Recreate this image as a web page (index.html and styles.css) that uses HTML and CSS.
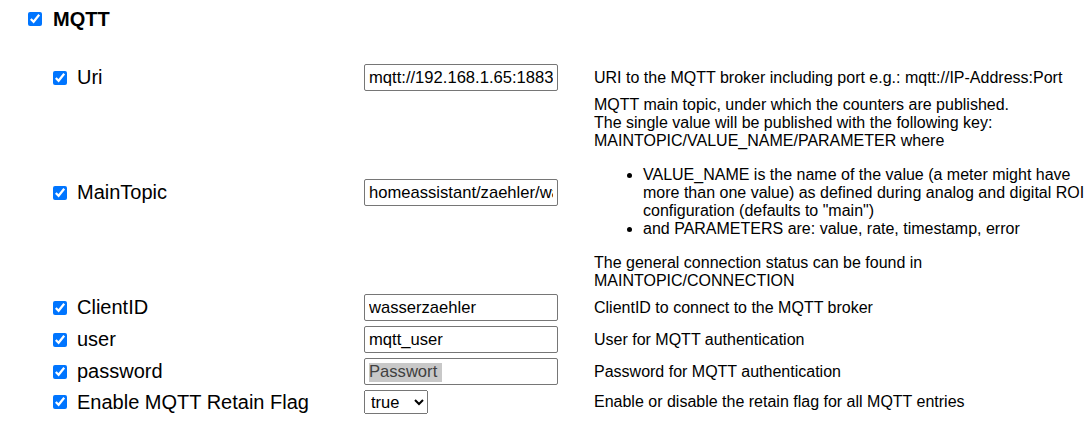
FILE: index.html
```html
<!DOCTYPE html>
<html>
<head>
<meta charset="utf-8">
<title>MQTT</title>
<link rel="stylesheet" href="styles.css">
</head>
<body>
<div class="head">
  <input type="checkbox" class="cb" checked>
  <span class="head-title">MQTT</span>
</div>
<table class="params">
  <tr>
    <td class="lbl"><label><input type="checkbox" class="cb" checked><span>Uri</span></label></td>
    <td class="val"><input type="text" class="txt" value="mqtt://192.168.1.65:1883"></td>
    <td class="desc">URI to the MQTT broker including port e.g.: mqtt://IP-Address:Port</td>
  </tr>
  <tr>
    <td class="lbl"><label><input type="checkbox" class="cb" checked><span>MainTopic</span></label></td>
    <td class="val"><input type="text" class="txt" value="homeassistant/zaehler/wasserzaehler"></td>
    <td class="desc desc-long">
      <p>MQTT main topic, under which the counters are published.<br>The single value will be published with the following key:<br>MAINTOPIC/VALUE_NAME/PARAMETER where</p>
      <ul>
        <li>VALUE_NAME is the name of the value (a meter might have more than one value) as defined during analog and digital ROI configuration (defaults to "main")</li>
        <li>and PARAMETERS are: value, rate, timestamp, error</li>
      </ul>
      <p>The general connection status can be found in<br>MAINTOPIC/CONNECTION</p>
    </td>
  </tr>
  <tr>
    <td class="lbl"><label><input type="checkbox" class="cb" checked><span>ClientID</span></label></td>
    <td class="val"><input type="text" class="txt" value="wasserzaehler"></td>
    <td class="desc">ClientID to connect to the MQTT broker</td>
  </tr>
  <tr>
    <td class="lbl"><label><input type="checkbox" class="cb" checked><span>user</span></label></td>
    <td class="val"><input type="text" class="txt" value="mqtt_user"></td>
    <td class="desc">User for MQTT authentication</td>
  </tr>
  <tr>
    <td class="lbl"><label><input type="checkbox" class="cb" checked><span>password</span></label></td>
    <td class="val"><input type="text" class="txt pw" value="Passwort"></td>
    <td class="desc">Password for MQTT authentication</td>
  </tr>
  <tr>
    <td class="lbl"><label><input type="checkbox" class="cb" checked><span>Enable MQTT Retain Flag</span></label></td>
    <td class="val"><select class="sel"><option selected>true</option><option>false</option></select></td>
    <td class="desc">Enable or disable the retain flag for all MQTT entries</td>
  </tr>
</table>
</body>
</html>
```
FILE: styles.css
```css
html, body {
  margin: 0;
  padding: 0;
  background: #fff;
  color: #000;
  font-family: "Liberation Sans", Arial, sans-serif;
}

.cb {
  width: 14px;
  height: 14px;
  margin: 0;
  accent-color: #0075ff;
  flex: none;
}

.head {
  display: flex;
  align-items: center;
  gap: 11px;
  height: 38px;
  padding-left: 28px;
}

.head-title {
  font-size: 20px;
  font-weight: bold;
}

.params {
  border-collapse: separate;
  border-spacing: 0;
  margin: 23px 0 0 53px;
}

.params td {
  padding: 3px 0 2px 0;
  vertical-align: middle;
}

.lbl {
  width: 311px;
}

.lbl label {
  display: flex;
  align-items: center;
  gap: 10px;
  font-size: 20px;
  line-height: 23px;
}

.val {
  width: 194px;
}

.txt {
  box-sizing: border-box;
  width: 194px;
  height: 27px;
  margin: 0;
  padding: 0 4px;
  border: 1px solid #767676;
  border-radius: 2px;
  font-family: "Liberation Sans", Arial, sans-serif;
  font-size: 16.6px;
  color: #000;
  background: #fff;
  display: block;
}

.txt.pw {
  color: #404040;
  background: #fff linear-gradient(#c8c8c8, #c8c8c8) no-repeat 4px 4px / 73px 19px;
}

.sel {
  box-sizing: border-box;
  width: 64px;
  height: 24px;
  padding: 0 2px;
  font-family: "Liberation Sans", Arial, sans-serif;
  font-size: 16.5px;
  margin: 0;
  display: block;
}

.params td.desc {
  padding-left: 36px;
  width: 493px;
  font-size: 16px;
  line-height: 18px;
}

.params td.desc-long {
  padding-bottom: 1px;
}

.desc p {
  margin: 0;
}

.desc ul {
  margin: 16px 0;
  padding-left: 49px;
}
```
